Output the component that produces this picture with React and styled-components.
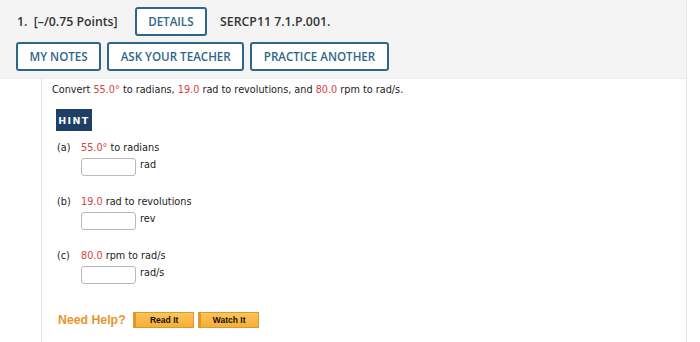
import React from 'react';
import styled, { createGlobalStyle } from 'styled-components';

const GlobalStyle = createGlobalStyle`
  html, body {
    margin: 0;
    padding: 0;
    background: #ffffff;
  }
  body {
    width: 700px;
    height: 342px;
    overflow: hidden;
  }
`;

const parts = [
  { label: '(a)', value: '55.0°', rest: ' to radians', unit: 'rad' },
  { label: '(b)', value: '19.0', rest: ' rad to revolutions', unit: 'rev' },
  { label: '(c)', value: '80.0', rest: ' rpm to rad/s', unit: 'rad/s' },
];

const App = () => {
  return (
    <Page>
      <GlobalStyle />
      <Header>
        <HeaderRow>
          <QuestionTitle>1.&nbsp; [–/0.75 Points]</QuestionTitle>
          <OutlineButton>DETAILS</OutlineButton>
          <QuestionCode>SERCP11 7.1.P.001.</QuestionCode>
        </HeaderRow>
        <HeaderRow gap="6px">
          <OutlineButton>MY NOTES</OutlineButton>
          <OutlineButton>ASK YOUR TEACHER</OutlineButton>
          <OutlineButton>PRACTICE ANOTHER</OutlineButton>
        </HeaderRow>
      </Header>
      <Body>
        <Prompt>
          Convert <Red>55.0°</Red> to radians, <Red>19.0</Red> rad to revolutions, and <Red>80.0</Red> rpm to rad/s.
        </Prompt>
        <HintButton>HINT</HintButton>
        <PartList>
          {parts.map(part => (
            <Part key={part.label}>
              <PartLabel>{part.label}</PartLabel>
              <PartContent>
                <PartText><Red>{part.value}</Red>{part.rest}</PartText>
                <AnswerRow>
                  <AnswerBox />
                  <Unit>{part.unit}</Unit>
                </AnswerRow>
              </PartContent>
            </Part>
          ))}
        </PartList>
        <HelpRow>
          <HelpText>Need Help?</HelpText>
          <HelpButton>Read It</HelpButton>
          <HelpButton>Watch It</HelpButton>
        </HelpRow>
      </Body>
    </Page>
  );
};

export default App;

const Page = styled.div`
  width: 687px;
  height: 342px;
  font-family: "Open Sans", "Liberation Sans", sans-serif;
`;

const Header = styled.div`
  background-color: #f4f4f4;
  border-right: 1px solid #e6e6e6;
  border-bottom: 1px solid #ececec;
  padding: 7px 0 7px 16px;
  display: flex;
  flex-direction: column;
  gap: 6px;
`;

const HeaderRow = styled.div`
  display: flex;
  align-items: center;
  gap: ${props => props.gap || '13px'};
`;

const QuestionTitle = styled.span`
  font-size: 12.3px;
  font-weight: 600;
  color: #333333;
  margin-left: 1px;
  margin-right: 4px;
`;

const QuestionCode = styled.span`
  font-size: 12.3px;
  font-weight: 600;
  color: #333333;
`;

const OutlineButton = styled.div`
  height: 29px;
  box-sizing: border-box;
  padding: 0 11.5px;
  border: 2px solid #2f6788;
  border-radius: 3px;
  background: #ffffff;
  color: #2f6788;
  font-size: 11.6px;
  font-weight: 600;
  display: flex;
  align-items: center;
`;

const Body = styled.div`
  margin-left: 41px;
  height: 263px;
  border-left: 1px solid #e2e2e2;
  border-right: 1px solid #e2e2e2;
  padding: 3px 0 0 10px;
  font-family: "DejaVu Sans", Verdana, sans-serif;
  font-size: 9.7px;
  color: #222222;
`;

const Prompt = styled.p`
  margin: 0;
  line-height: 16px;
`;

const Red = styled.span`
  color: #d6423f;
`;

const HintButton = styled.div`
  display: inline-flex;
  align-items: center;
  justify-content: center;
  margin: 11px 0 0 4px;
  width: 36px;
  height: 22px;
  background-color: #1e3f66;
  color: #ffffff;
  font-weight: bold;
  font-size: 9.5px;
  letter-spacing: 1.4px;
`;

const PartList = styled.div`
  display: flex;
  flex-direction: column;
  gap: 18px;
  margin: 9px 0 0 5px;
`;

const Part = styled.div`
  display: flex;
`;

const PartLabel = styled.span`
  width: 24px;
  line-height: 16px;
`;

const PartContent = styled.div`
  display: flex;
  flex-direction: column;
  gap: 2px;
`;

const PartText = styled.span`
  line-height: 16px;
`;

const AnswerRow = styled.div`
  display: flex;
  align-items: flex-start;
  gap: 4px;
`;

const AnswerBox = styled.div`
  width: 55px;
  height: 18px;
  box-sizing: border-box;
  border: 1px solid #b8b8b8;
  border-radius: 3px;
  background: #ffffff;
`;

const Unit = styled.span`
  line-height: 14px;
`;

const HelpRow = styled.div`
  display: flex;
  align-items: center;
  gap: 4px;
  margin: 28px 0 0 6px;
`;

const HelpText = styled.span`
  font-family: "Liberation Sans", Arial, sans-serif;
  font-weight: bold;
  font-size: 12.3px;
  color: #e8952d;
  margin-right: 3px;
`;

const HelpButton = styled.div`
  width: 61px;
  height: 16px;
  box-sizing: border-box;
  border: 1px solid #d99a35;
  border-left: 3px solid #e0962a;
  background: linear-gradient(#fbc45a, #f6ae35);
  font-family: "Liberation Sans", Arial, sans-serif;
  font-weight: bold;
  font-size: 8.5px;
  color: #111111;
  display: flex;
  align-items: center;
  justify-content: center;
`;
